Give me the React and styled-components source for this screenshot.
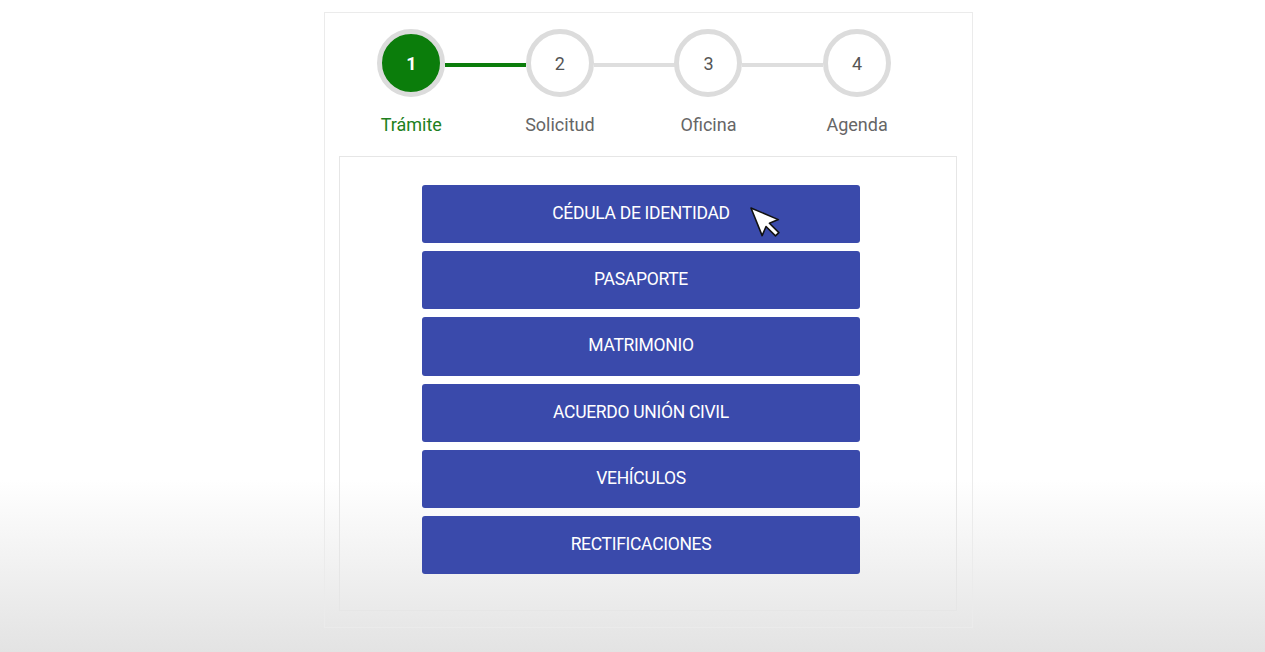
import React from 'react';
import styled, { createGlobalStyle, css } from 'styled-components';

const GlobalStyle = createGlobalStyle`
  html, body {
    margin: 0;
    padding: 0;
  }
  body {
    min-height: 652px;
    font-family: Roboto, 'Liberation Sans', sans-serif;
    background: linear-gradient(to bottom, #ffffff 0, #ffffff 480px, #e3e3e3 652px);
  }
`;

const Page = styled.div`
  min-height: 652px;
  padding-top: 12px;
  box-sizing: border-box;
`;

const Card = styled.section`
  width: 649px;
  margin-left: 324px;
  box-sizing: border-box;
  border: 1px solid #ebebeb;
  padding: 16px 15px 16px 14px;
`;

const Stepper = styled.ol`
  display: flex;
  list-style: none;
  margin: 0 0 0 -2px;
  padding: 0;
`;

const Step = styled.li`
  position: relative;
  width: 148.6px;
  display: flex;
  flex-direction: column;
  align-items: center;

  &:not(:last-child)::after {
    content: '';
    position: absolute;
    top: 34px;
    left: calc(50% + 34px);
    width: 81px;
    height: 4px;
    background-color: ${({ done }) => (done ? '#0b7d0b' : '#dedede')};
  }
`;

const Circle = styled.div`
  width: 68px;
  height: 68px;
  box-sizing: border-box;
  border-radius: 50%;
  border: 5px solid #dcdcdc;
  display: flex;
  align-items: center;
  justify-content: center;
  font-size: 18px;
  color: #555;
  background-color: #fff;
  ${({ active }) =>
    active &&
    css`
      background-color: #0b7d0b;
      color: #fff;
      font-weight: 700;
    `};
`;

const Label = styled.span`
  margin-top: 17px;
  font-size: 18px;
  color: ${({ active }) => (active ? '#207f20' : '#666')};
`;

const Panel = styled.div`
  margin-top: 21px;
  border: 1px solid #e6e6e6;
  padding: 28px 0 36px 82px;
  display: flex;
  flex-direction: column;
  gap: 8px;
`;

const Option = styled.button`
  position: relative;
  width: 438px;
  height: 58.2px;
  border: none;
  border-radius: 3px;
  background-color: #3a4aab;
  color: #fff;
  font-family: Roboto, 'Liberation Sans', sans-serif;
  font-size: 17.5px;
  letter-spacing: -0.3px;
  text-transform: uppercase;
  cursor: pointer;
  padding: 0 0 2px;
`;

const Pointer = styled.svg`
  position: absolute;
  left: 327px;
  top: 21px;
  width: 40px;
  height: 44px;
  pointer-events: none;
`;

const steps = [
  { n: 1, label: 'Trámite' },
  { n: 2, label: 'Solicitud' },
  { n: 3, label: 'Oficina' },
  { n: 4, label: 'Agenda' },
];

const options = [
  'Cédula de identidad',
  'Pasaporte',
  'Matrimonio',
  'Acuerdo unión civil',
  'Vehículos',
  'Rectificaciones',
];

function Cursor() {
  return (
    <Pointer viewBox="0 0 40 44">
      <g transform="translate(2 2) rotate(-22) scale(1.75)">
        <path
          d="M0 0 L0 17 L4 13 L7 20 L9.5 19 L6.5 12 L12 12 Z"
          fill="#fff"
          stroke="#111"
          strokeWidth="0.9"
          strokeLinejoin="round"
        />
      </g>
    </Pointer>
  );
}

export default function App() {
  return (
    <Page>
      <GlobalStyle />
      <Card>
        <Stepper>
          {steps.map((s) => (
            <Step key={s.n} done={s.n === 1}>
              <Circle active={s.n === 1}>{s.n}</Circle>
              <Label active={s.n === 1}>{s.label}</Label>
            </Step>
          ))}
        </Stepper>
        <Panel>
          {options.map((o, i) => (
            <Option key={o}>
              {o}
              {i === 0 && <Cursor />}
            </Option>
          ))}
        </Panel>
      </Card>
    </Page>
  );
}
